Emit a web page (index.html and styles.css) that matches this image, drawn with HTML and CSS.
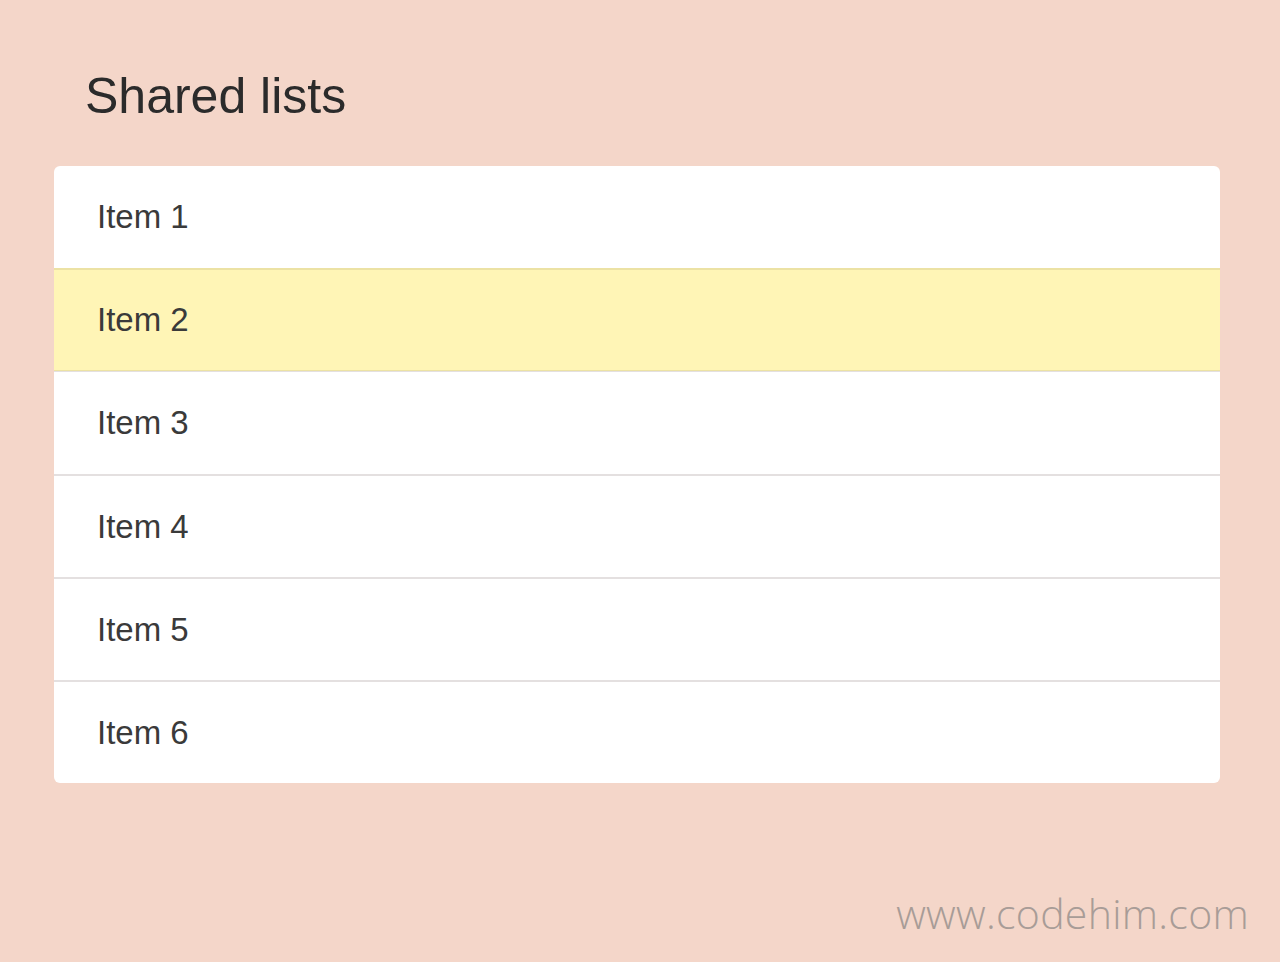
FILE: index.html
```html
<!DOCTYPE html>
<html lang="en">
<head>
  <meta charset="UTF-8" />
  <meta name="viewport" content="width=device-width, initial-scale=1.0"/>
  <title>Shared lists</title>
  <link rel="stylesheet" href="styles.css">
</head>
<body>
  <div class="wrap">
    <h2 class="title">Shared lists</h2>
    <ul class="list">
      <li class="list-item">Item 1</li>
      <li class="list-item active">Item 2</li>
      <li class="list-item">Item 3</li>
      <li class="list-item">Item 4</li>
      <li class="list-item">Item 5</li>
      <li class="list-item">Item 6</li>
    </ul>
  </div>
  <div class="brand">www.codehim.com</div>
</body>
</html>
```

FILE: styles.css
```css
body {
  margin: 0;
  padding: 0;
  background: #f4d6c9;
  font-family: 'Liberation Sans', Arial, sans-serif;
  color: #333;
  height: 962px;
  overflow: hidden;
  position: relative;
}

.wrap {
  padding: 0 60px 0 54px;
}

.title {
  margin: 0;
  padding: 67px 0 0 31px;
  height: 166px;
  box-sizing: border-box;
  font-size: 50px;
  font-weight: normal;
  line-height: 58px;
  color: #2b2b2b;
}

.list {
  list-style: none;
  margin: 0;
  padding: 0;
  background: #fff;
  border-radius: 6px;
  overflow: hidden;
}

.list-item {
  height: 103px;
  box-sizing: border-box;
  padding: 0 43px;
  display: flex;
  align-items: center;
  font-size: 33px;
  color: #3a3a3a;
  border-top: 2px solid #e4e0e0;
}

.list-item:first-child {
  border-top: none;
  height: 102px;
}

.list-item.active {
  background: #fff5b6;
  border-top: 2px solid #ece2a4;
  border-bottom: 1px solid #ece2a4;
}

.list-item.active + .list-item {
  border-top: 1px solid #e4e0e0;
}

.brand {
  position: absolute;
  right: 31px;
  bottom: 21px;
  font-family: 'Open Sans', sans-serif;
  font-weight: 300;
  font-size: 41px;
  letter-spacing: 0.3px;
  color: #a89c97;
}
```
